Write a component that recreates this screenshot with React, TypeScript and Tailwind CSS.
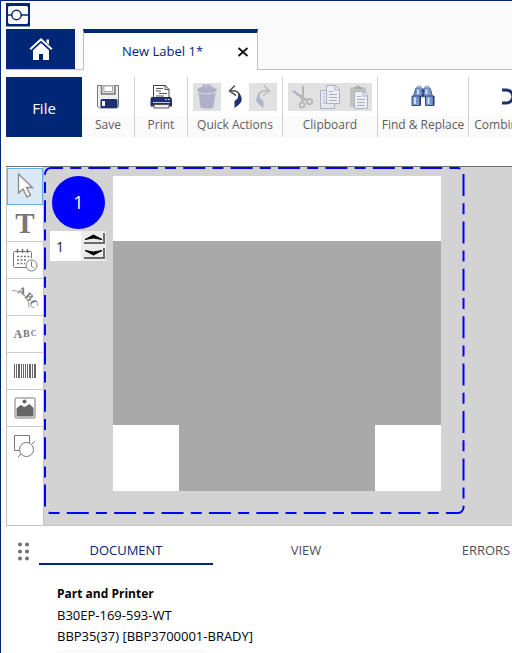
import type { ReactNode } from "react"

const groupLabel = "mt-auto flex h-[21px] items-center justify-center whitespace-nowrap bg-[#fafafa] pb-1 text-[12px] leading-4 text-[#5c5c5c]"

function ToolGroup({ label, width, children }: { label: string; width: string; children: ReactNode }) {
  return (
    <div className={`flex h-[60px] shrink-0 flex-col border-r border-[#d0d0d0] pt-[6px] ${width}`}>
      <div className="flex justify-center">{children}</div>
      <div className={groupLabel}>{label}</div>
    </div>
  )
}

function IconButton({ label, disabled, children }: { label: string; disabled?: boolean; children: ReactNode }) {
  return (
    <button type="button" aria-label={label} disabled={disabled} className="flex size-7 shrink-0 items-center justify-center disabled:bg-[#e1e1e1]">
      <svg viewBox="0 0 28 28" className="size-7" fill="none">{children}</svg>
    </button>
  )
}

function SideButton({ label, active, children }: { label: string; active?: boolean; children: ReactNode }) {
  return (
    <button
      type="button"
      aria-label={label}
      className={`flex h-[37px] w-full items-center justify-center border-b ${active ? "border border-[#66aee7] bg-[#dbe9f6]" : "border-[#cccccc]"}`}
    >
      {children}
    </button>
  )
}

function TitleBar() {
  return (
    <header className="bg-[#fafafa]">
      <div className="h-[26px] pl-[5px] pt-[2px]">
        <svg viewBox="0 0 24 24" className="size-6">
          <path d="M0 0h24v23.500H0z" fill="#002776" />
          <path d="M3.500 3h17l1.500 1v7.300H2V4zM2 12.800h20V20l-1.500 1h-17L2 20z" fill="#fff" />
          <circle cx="10.500" cy="12" r="4.700" fill="#fff" stroke="#002776" strokeWidth="1.500" />
        </svg>
      </div>
      <div className="flex h-[43px] items-end pt-[2px]">
        <div className="h-full w-[5px]" />
        <button type="button" aria-label="Home" className="flex h-full w-[69px] items-center justify-center border-b border-[#c0c0c0] bg-[#002776]">
          <svg viewBox="0 0 24 24" className="size-6" fill="#fff">
            <path d="M.5 11.500 12 1l11.500 10.500-1.300 1.500L12 3.800 1.800 13z" />
            <path d="M17.500 2.500H20v5l-2.500-2z" />
            <path d="M4 13.300 12 6l8 7.300V23h-6v-6h-4v6H4z" />
          </svg>
        </button>
        <div className="h-full w-2 border-b border-[#c0c0c0]" />
        <div className="flex h-full w-[175px] items-center border-x border-t-4 border-x-[#c0c0c0] border-t-[#002776] bg-white">
          <a href="#label" className="flex-1 pl-[38px] text-[13px] text-[#002776]">New Label 1*</a>
          <button type="button" aria-label="Close tab" className="mr-2 flex size-3 items-center justify-center">
            <svg viewBox="0 0 12 12" className="size-3" stroke="#111" strokeWidth="1.700">
              <path d="M1.500 2 10.500 10M10.500 2 1.500 10" />
            </svg>
          </button>
        </div>
        <div className="h-full flex-1 border-b border-[#c0c0c0]" />
      </div>
    </header>
  )
}

function Toolbar() {
  return (
    <div className="flex overflow-hidden pl-[5px] pt-[7px]">
      <button type="button" className="h-[60px] w-[76px] shrink-0 bg-[#002776] pt-[2px] text-[15px] text-white">File</button>
      <ToolGroup label="Save" width="w-[53px]">
        <IconButton label="Save">
          <path d="M3.500 2.500h21v21l-2 1.500H5.500l-2-1.500z" fill="#efefef" stroke="#777" />
          <path d="M7.500 2.500v8.500h13.500V2.500" fill="#ddd" stroke="#777" strokeWidth="1.500" />
          <path d="M10 3h8.500v5.500H10z" fill="#fff" stroke="#aaa" />
          <rect x="6.500" y="16" width="17" height="9" rx="1.500" fill="#202f70" />
          <path d="M8 18h3v5H8z" fill="#fff" />
        </IconButton>
      </ToolGroup>
      <ToolGroup label="Print" width="w-[53px]">
        <IconButton label="Print">
          <path d="M6.500 15V2.500h12l3.500 4V15" fill="#fff" stroke="#444" />
          <path d="M18 2.500v4h4M9 5.500h7M9 8h5M12 10.500h8M9 13h8" stroke="#555" />
          <path d="M4.500 14h19l1.500 2v7.500H3.500V16z" fill="#202f70" />
          <path d="M6 19.500h17M18 16.500h2M21 16.500h2" stroke="#c5cbe8" />
          <path d="M7 21.500h15V25H7z" fill="#eee" stroke="#555" />
        </IconButton>
      </ToolGroup>
      <ToolGroup label="Quick Actions" width="w-[95px]">
        <IconButton label="Delete" disabled>
          <path d="M5.500 9.500h17l-2 15q-6.500 2.500-13 0z" fill="#aeb1c9" />
          <ellipse cx="14" cy="7" rx="10" ry="3.500" fill="#aeb1c9" />
          <path d="M4.500 9q9.500 4 19 0" stroke="#d7d8df" />
          <path d="M10.500 4.500V2.500h7v2" stroke="#aeb1c9" strokeWidth="1.600" />
        </IconButton>
        <IconButton label="Undo">
          <path d="M14 2.500 8.500 8l6.500 4.500M8.500 8q9-1.500 10.500 5" stroke="#555" strokeWidth="1.600" />
          <path d="M17 10q4.500 3 3.500 8-1 3-7 7v-7q5-3 3.500-8z" fill="#202f70" />
        </IconButton>
        <IconButton label="Redo" disabled>
          <path d="M15 2.500 20.500 8 14 12.500M20 8q-9.500-1.500-11 5" stroke="#b9b9b9" strokeWidth="1.500" />
          <path d="M11 10q-4.500 3-3.500 8 1 3 7 7v-7q-5-3-3.500-8z" fill="#b2b6cd" />
        </IconButton>
      </ToolGroup>
      <ToolGroup label="Clipboard" width="w-[95px]">
        <IconButton label="Cut" disabled>
          <path d="m5 8 13 9" stroke="#aeb1c9" strokeWidth="2.500" />
          <path d="M15 3v10l-1 7" stroke="#b5b5b5" strokeWidth="2" />
          <circle cx="14" cy="22" r="2.500" stroke="#b5b5b5" strokeWidth="1.700" />
          <circle cx="21.500" cy="18.500" r="2.700" stroke="#b5b5b5" strokeWidth="1.700" />
        </IconButton>
        <IconButton label="Copy" disabled>
          <path d="M4.500 7.500h14v18h-14z" fill="#e8e8eb" stroke="#a9b0cd" />
          <path d="M7 11h2M7 14h2M7 17h2M7 20h8" stroke="#a9b0cd" />
          <path d="M10.500 2.500h9l4 4v14h-13z" fill="#eee" stroke="#a9b0cd" />
          <path d="M19 3v4h4M13 8.500h4M13 11.500h8M13 14.500h8M13 17.500h8" stroke="#a9b0cd" />
        </IconButton>
        <IconButton label="Paste" disabled>
          <path d="M6 4.500h16V24H6z" fill="#c1c1c1" />
          <path d="M10 6V4h2l2-2 2 2h2v2z" fill="#aaa" />
          <path d="M10.500 8.500h9l4 4v13h-13z" fill="#eee" stroke="#a9b0cd" />
          <path d="M19 9v4h4M13 13.500h4M13 16.500h8M13 19.500h8M13 22.500h8" stroke="#a9b0cd" />
        </IconButton>
      </ToolGroup>
      <ToolGroup label="Find &amp; Replace" width="w-[91px]">
        <IconButton label="Find and replace">
          <path d="M4.500 14 6.500 6l2-2h3l2 2v8zM14.500 14V6l2-2h3l2 2 2 8z" fill="#7896c8" stroke="#485d8b" />
          <path d="M3 13h8.500v9.500H3zM16.500 13H25v9.500h-8.500z" fill="#7896c8" stroke="#334a80" />
          <path d="M8.500 3h3v2h-3zM16.500 3h3v2h-3z" fill="#b4c4df" stroke="#7085aa" strokeWidth=".5" />
          <path d="M6 14.500V21M19.500 14.500V21M9 6.500v5M17.500 6.500v5" stroke="#d0dff8" strokeWidth="2" />
          <path d="M11 13v9M24.500 13v9M12.500 8h3M12.500 12h3" stroke="#263b70" strokeWidth="1.300" />
        </IconButton>
      </ToolGroup>
      <ToolGroup label="Combine" width="w-[62px]">
        <div className="pl-6">
          <IconButton label="Combine">
            <path d="M4 7h4q6 0 7 6.500h9M4 20h4q6 0 7-6.500" stroke="#202f70" strokeWidth="3" />
          </IconButton>
        </div>
      </ToolGroup>
    </div>
  )
}

function SideTools() {
  return (
    <div className="w-[38px] shrink-0 border-x border-[#c3c3c3] bg-white pt-px">
      <SideButton label="Select" active>
        <svg viewBox="0 0 24 28" className="h-7 w-6">
          <path d="M5.500 1v19l4.500-4 4 8 3.500-1.800-4-7.700h6z" fill="#fff" stroke="#888" strokeWidth="1.300" />
        </svg>
      </SideButton>
      <SideButton label="Text">
        <span className="font-['Liberation_Serif',serif] text-[29px] font-bold leading-7 text-[#777]">T</span>
      </SideButton>
      <SideButton label="Date and time">
        <svg viewBox="0 0 26 26" className="size-[26px]" fill="none" stroke="#777">
          <path d="M14 20.500H2.500q-1 0-1-1V5.500q0-1 1-1h16q1 0 1 1V11" />
          <path d="M5.500 2v4M10.500 2v4M15.500 2v4" strokeWidth="1.600" />
          <path d="M5 9.500h13M5 13h9M5 16.500h8" strokeWidth="1.600" strokeDasharray="2 1.500" />
          <circle cx="19.500" cy="18.500" r="5.500" fill="#fff" />
          <path d="M19.500 14.500v4.500l2.500 2.500" />
        </svg>
      </SideButton>
      <SideButton label="Curved text">
        <svg viewBox="0 0 32 32" className="size-8" fill="#777" fontFamily="Liberation Serif, serif" fontWeight="bold" fontSize="11">
          <text transform="translate(8 12) rotate(20)">A</text>
          <text transform="translate(15 16) rotate(42)">B</text>
          <text transform="translate(20 21) rotate(62)">C</text>
          <path d="M3 9.500q10 0 15 8 2 4 2 9" fill="none" stroke="#999" />
        </svg>
      </SideButton>
      <SideButton label="Warped text">
        <span className="flex items-center gap-px font-['Liberation_Serif',serif] font-bold leading-4 text-[#777]">
          <span className="text-[12px]">A</span>
          <span className="text-[10px]">B</span>
          <span className="text-[8px]">C</span>
        </span>
      </SideButton>
      <SideButton label="Barcode">
        <svg viewBox="0 0 22 14" className="h-[14px] w-[22px]" fill="#666">
          <path d="M0 0h1v14H0zM2 0h1v14H2zM4 0h2v14H4zM7 0h1v14H7zM9 0h1v14H9zM11 0h1v14h-1zM13 0h1v14h-1zM15 0h2v14h-2zM18 0h1v14h-1zM20 0h2v14h-2z" />
        </svg>
      </SideButton>
      <SideButton label="Picture">
        <svg viewBox="0 0 22 22" className="size-[22px]">
          <rect x="1" y="1" width="20" height="20" rx="1" fill="#fff" stroke="#777" />
          <circle cx="10.500" cy="4.500" r="2" fill="#666" />
          <path d="M2.500 19.500v-8l4-3.500 4 2 5-3 4 4v8.500z" fill="#666" />
        </svg>
      </SideButton>
      <button type="button" aria-label="Shapes" className="flex h-[37px] w-full items-center justify-center">
        <svg viewBox="0 0 24 24" className="size-6" fill="none" stroke="#777">
          <path d="M1.500 1.500h15v15h-15z" />
          <circle cx="13.500" cy="15.500" r="7" fill="#fff" />
          <path d="m19 10 3-3M8 20l-3 3" />
        </svg>
      </button>
    </div>
  )
}

function LabelCanvas() {
  return (
    <main className="flex-1 overflow-hidden bg-[#d3d3d3]">
      <div className="relative flex h-[347px] w-[421px] pl-[6px] pt-[9px]">
        {/* selection outline over the label page */}
        <svg viewBox="0 0 421 347" className="pointer-events-none absolute left-0 top-0 h-[347px] w-[421px]" fill="none">
          <path
            d="M419.500 7V340.500A6 6 0 0 1 413.500 346H7A6 6 0 0 1 1 340.500V7A6 6 0 0 1 7 1H413.500A6 6 0 0 1 419.500 7"
            stroke="#0000ff"
            strokeWidth="2"
            strokeDasharray="22 7.200 11 7.200"
          />
        </svg>
        <div className="w-[63px] shrink-0">
          <div className="ml-[2px] flex size-[53px] items-center justify-center rounded-full bg-[#0000ff] text-[18px] font-medium text-white">1</div>
          <div className="mt-[2px] flex h-[30px] w-14">
            <input aria-label="Label number" defaultValue="1" className="w-[31px] bg-white pl-[6px] text-[14px] text-[#222] outline-none" />
            <div className="flex flex-1 flex-col justify-between bg-[#ececec] py-[2px] pl-[3px]">
              <button type="button" aria-label="Next label" className="h-[11px] w-[21px] border-b-2 border-r-2 border-[#6b6b6b]">
                <svg viewBox="0 0 19 9" className="h-[9px] w-[19px]"><path d="m1 6.500 8.500-4.500 8.500 4.500-8.500-1.500z" fill="#000" stroke="#000" /></svg>
              </button>
              <button type="button" aria-label="Previous label" className="h-[11px] w-[21px] border-b-2 border-r-2 border-[#6b6b6b]">
                <svg viewBox="0 0 19 9" className="h-[9px] w-[19px]"><path d="m1 2.500 8.500 4.500 8.500-4.500-8.500 1.500z" fill="#000" stroke="#000" /></svg>
              </button>
            </div>
          </div>
        </div>
        <div className="flex h-[315px] w-[328px] flex-col bg-[#a9a9a9]">
          <div className="h-[65px] bg-white" />
          <div className="mt-auto flex justify-between">
            <div className="size-[66px] bg-white" />
            <div className="size-[66px] bg-white" />
          </div>
        </div>
      </div>
    </main>
  )
}

const panelTab = "w-[174px] shrink-0 pt-1 text-center text-[13px] leading-[18px]"

function Details() {
  return (
    <section className="overflow-hidden bg-white">
      <nav className="flex gap-[6px] pl-[7px] pt-[11px]">
        <svg viewBox="0 0 20 28" className="h-7 w-5 shrink-0" fill="#707070">
          <circle cx="7" cy="7.500" r="2" /><circle cx="14" cy="7.500" r="2" />
          <circle cx="7" cy="14.500" r="2" /><circle cx="14" cy="14.500" r="2" />
          <circle cx="7" cy="21.500" r="2" /><circle cx="14" cy="21.500" r="2" />
        </svg>
        <a href="#document" className={`${panelTab} border-b-2 border-[#002776] text-[#002776]`}>DOCUMENT</a>
        <a href="#view" className={`${panelTab} text-[#505050]`}>VIEW</a>
        <a href="#errors" className={`${panelTab} text-[#505050]`}>ERRORS</a>
      </nav>
      <div className="pl-[51px] pt-[18px] leading-[21px] text-black">
        <h2 className="text-[12px] font-bold leading-[22px]">Part and Printer</h2>
        <p className="text-[13px]">B30EP-169-593-WT</p>
        <p className="text-[13px]">BBP35(37) [BBP3700001-BRADY]</p>
        <div className="mt-[4px] h-px w-[148px] bg-[#f3f3f3]" />
      </div>
    </section>
  )
}

export default function App() {
  return (
    <div className="min-h-screen overflow-hidden border-l border-t border-[#002776] bg-white font-['Open_Sans','Noto_Sans',sans-serif]">
      <TitleBar />
      <Toolbar />
      <div className="flex">
        <div className="w-[5px] shrink-0" />
        <div className="min-w-0 flex-1">
          <div className="mt-[29px] flex h-[360px] border-b border-t border-b-[#c3c3c3] border-t-[#707070]">
            <SideTools />
            <LabelCanvas />
          </div>
          <Details />
        </div>
      </div>
    </div>
  )
}
